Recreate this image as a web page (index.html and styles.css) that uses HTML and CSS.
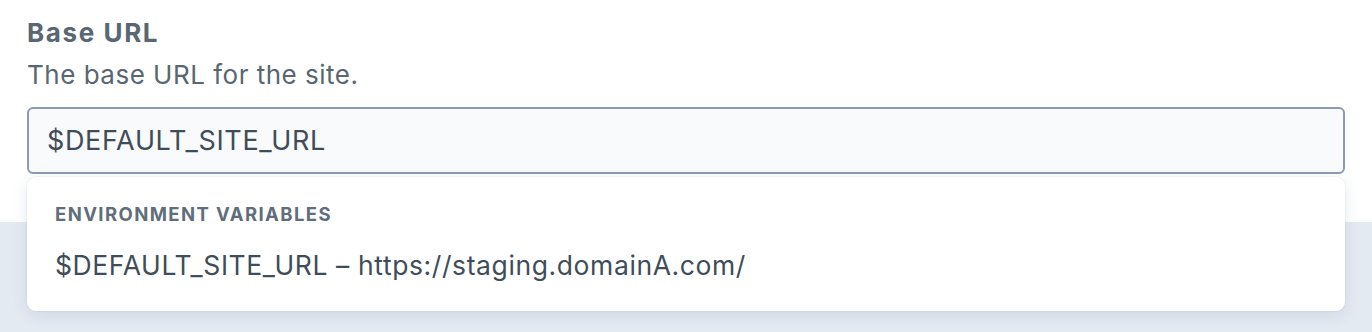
FILE: index.html
```html
<!DOCTYPE html>
<html lang="en">
<head>
<meta charset="utf-8">
<title>Base URL</title>
<link rel="stylesheet" href="styles.css">
</head>
<body>
<div class="page">
  <div class="pane">
    <div class="field">
      <div class="label">Base URL</div>
      <div class="instructions">The base URL for the site.</div>
      <div class="input-wrap">
        <div class="input">$DEFAULT_SITE_URL</div>
        <div class="menu">
          <div class="menu-heading">Environment Variables</div>
          <div class="menu-item">$DEFAULT_SITE_URL – https://staging.domainA.com/</div>
        </div>
      </div>
    </div>
  </div>
  <div class="below"></div>
</div>
</body>
</html>
```

FILE: styles.css
```css
* { box-sizing: border-box; }
html, body {
  margin: 0;
  padding: 0;
}
body {
  font-family: Inter, "Noto Sans", "Liberation Sans", sans-serif;
  color: #3f4d5a;
  background: #e4eaf2;
  -webkit-font-smoothing: antialiased;
}
.page {
  width: 1372px;
  height: 332px;
  display: flex;
  flex-direction: column;
}
.pane {
  background: #ffffff;
  height: 222px;
  padding: 16px 27px 0 27px;
}
.field {
  display: flex;
  flex-direction: column;
}
.label {
  font-size: 26px;
  font-weight: 700;
  line-height: 34px;
  letter-spacing: 1.6px;
  color: #596673;
}
.instructions {
  font-size: 26px;
  line-height: 34px;
  letter-spacing: 0.5px;
  margin-top: 8px;
  color: #596673;
}
.input-wrap {
  position: relative;
  margin-top: 15px;
}
.input {
  height: 67px;
  border: 2px solid #8a9bb2;
  border-radius: 6px;
  background: #f9fafc;
  padding: 0 18px;
  display: flex;
  align-items: center;
  font-size: 27px;
  letter-spacing: 0.65px;
  color: #3f4d5a;
}
.menu {
  position: absolute;
  left: 0;
  right: 0;
  top: 70px;
  height: 134px;
  background: #ffffff;
  border-radius: 9px;
  box-shadow: 0 0 0 1px rgba(31, 41, 51, 0.03), 0 4px 16px rgba(31, 60, 110, 0.11);
  padding: 22px 28px 0 28px;
}
.menu-heading {
  font-size: 18.5px;
  font-weight: 700;
  text-transform: uppercase;
  letter-spacing: 1.4px;
  color: #606d7b;
  line-height: 30px;
}
.menu-item {
  margin-top: 19px;
  font-size: 26.5px;
  line-height: 34px;
  letter-spacing: 0.6px;
  color: #3f4d5a;
}
.below {
  flex: 1;
  background: #e4eaf2;
}
```
